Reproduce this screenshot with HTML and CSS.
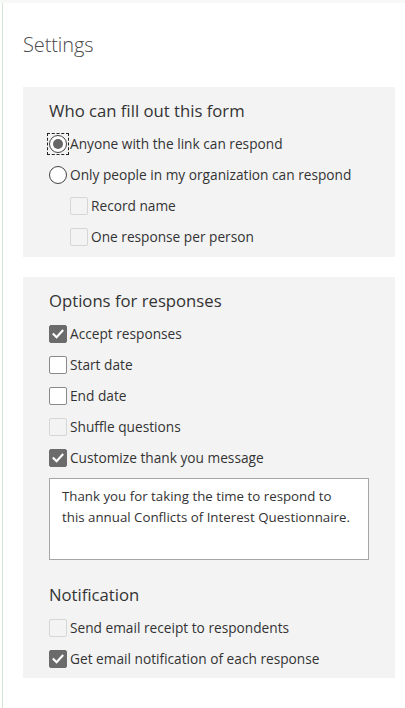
FILE: index.html
```html
<!DOCTYPE html>
<html lang="en">
<head>
<meta charset="utf-8">
<title>Settings</title>
<link rel="stylesheet" href="styles.css">
</head>
<body>
<div class="topstrip"></div>
<div class="main">
  <h1 class="title">Settings</h1>

  <section class="panel">
    <h2 class="panel-heading">Who can fill out this form</h2>
    <div class="row">
      <span class="focus"><span class="radio checked"></span></span>
      <span class="label">Anyone with the link can respond</span>
    </div>
    <div class="row">
      <span class="radio"></span>
      <span class="label">Only people in my organization can respond</span>
    </div>
    <div class="row indent">
      <span class="box disabled"></span>
      <span class="label">Record name</span>
    </div>
    <div class="row indent">
      <span class="box disabled"></span>
      <span class="label">One response per person</span>
    </div>
  </section>

  <section class="panel panel-second">
    <h2 class="panel-heading">Options for responses</h2>
    <div class="row">
      <span class="box checked"><svg viewBox="0 0 18 18" class="tick"><path d="M4 9.2 L7.4 12.6 L14 5.4" /></svg></span>
      <span class="label">Accept responses</span>
    </div>
    <div class="row">
      <span class="box"></span>
      <span class="label">Start date</span>
    </div>
    <div class="row">
      <span class="box"></span>
      <span class="label">End date</span>
    </div>
    <div class="row">
      <span class="box disabled"></span>
      <span class="label">Shuffle questions</span>
    </div>
    <div class="row">
      <span class="box checked"><svg viewBox="0 0 18 18" class="tick"><path d="M4 9.2 L7.4 12.6 L14 5.4" /></svg></span>
      <span class="label">Customize thank you message</span>
    </div>
    <div class="message">Thank you for taking the time to respond to<br>this annual Conflicts of Interest Questionnaire.</div>

    <h2 class="panel-heading notif">Notification</h2>
    <div class="row">
      <span class="box disabled"></span>
      <span class="label">Send email receipt to respondents</span>
    </div>
    <div class="row">
      <span class="box checked"><svg viewBox="0 0 18 18" class="tick"><path d="M4 9.2 L7.4 12.6 L14 5.4" /></svg></span>
      <span class="label">Get email notification of each response</span>
    </div>
  </section>
</div>
</body>
</html>
```

FILE: styles.css
```css
html, body {
  margin: 0;
  padding: 0;
  background: #ffffff;
}
body {
  font-family: "Open Sans", "Noto Sans", sans-serif;
  color: #333333;
  width: 405px;
  height: 708px;
  overflow: hidden;
}
.topstrip {
  height: 3px;
  background: #f8f8f8;
}
.main {
  margin-left: 2px;
  border-left: 1px solid #d3e6d3;
  height: 705px;
  padding: 0 10px 0 20px;
}
.title {
  margin: 0;
  padding-top: 30px;
  height: 54px;
  box-sizing: border-box;
  font-size: 20px;
  line-height: 24px;
  font-weight: 300;
  color: #4a4a4a;
  letter-spacing: -0.1px;
}
.panel {
  background: #f3f3f3;
  padding: 12px 0 5px 26px;
  margin-top: 30px;
}
.panel-second {
  margin-top: 20px;
  padding-bottom: 4px;
}
.panel-heading {
  margin: 0 0 5px 0;
  font-size: 16.7px;
  line-height: 24px;
  font-weight: 400;
  color: #333333;
}
.panel-heading.notif {
  margin-top: 23px;
}
.row {
  height: 31px;
  display: flex;
  align-items: center;
  font-size: 13.7px;
}
.row.indent {
  padding-left: 21px;
}
.label {
  margin-left: 3px;
  white-space: nowrap;
}
.radio {
  width: 18px;
  height: 18px;
  box-sizing: border-box;
  border: 1px solid #444444;
  border-radius: 50%;
  background: #ffffff;
  display: flex;
  align-items: center;
  justify-content: center;
  flex: none;
}
.radio.checked::after {
  content: "";
  width: 10px;
  height: 10px;
  border-radius: 50%;
  background: #666666;
}
.focus {
  width: 18px;
  height: 18px;
  outline: 1px dashed #222222;
  outline-offset: 1px;
  display: flex;
  flex: none;
}
.box {
  width: 18px;
  height: 18px;
  box-sizing: border-box;
  border: 1px solid #8a8a8a;
  border-radius: 2px;
  background: #ffffff;
  flex: none;
  display: flex;
}
.box.disabled {
  background: #f3f3f3;
  border-color: #d6d6d6;
}
.box.checked {
  background: #6b6b6b;
  border-color: #6b6b6b;
}
.tick {
  width: 16px;
  height: 16px;
}
.tick path {
  fill: none;
  stroke: #ffffff;
  stroke-width: 2.4;
  stroke-linecap: square;
}
.message {
  margin-top: 5px;
  width: 320px;
  height: 82px;
  box-sizing: border-box;
  border: 1px solid #a6a6a6;
  background: #ffffff;
  padding: 7px 0 0 12px;
  font-size: 13.3px;
  line-height: 21px;
  color: #333333;
  white-space: nowrap;
  overflow: hidden;
}
```
